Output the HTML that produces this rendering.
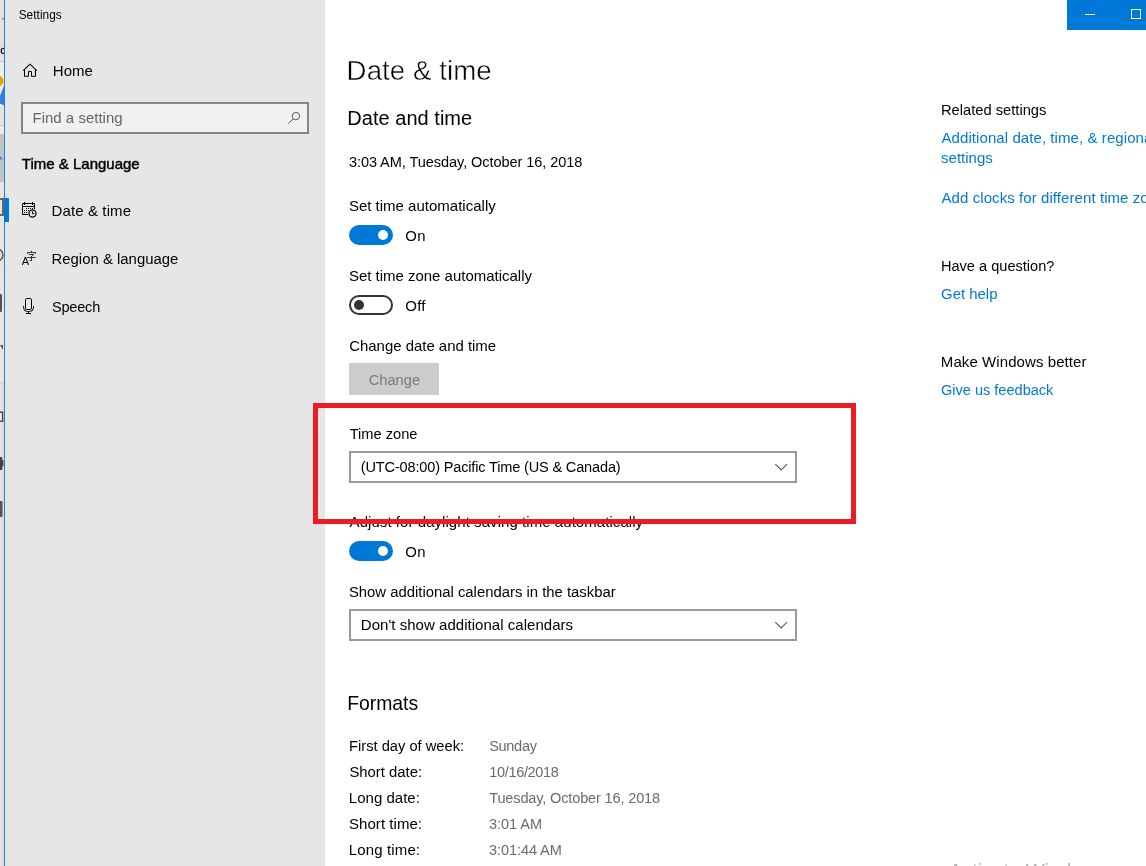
<!DOCTYPE html>
<html><head><meta charset="utf-8"><title>Settings</title>
<style>
html,body{margin:0;padding:0;}
body{width:1146px;height:866px;overflow:hidden;position:relative;background:#fff;font-family:"Liberation Sans",sans-serif;color:#000;}
.abs{position:absolute;white-space:nowrap;}
.t{position:absolute;white-space:nowrap;line-height:20px;font-size:15px;}
#txt{position:absolute;left:0;top:0;width:1146px;height:866px;will-change:transform;}
.toggle{position:absolute;width:44px;height:20px;border-radius:10px;box-sizing:border-box;}
.toggle.on{background:#0078d7;}
.toggle.on::after{content:"";position:absolute;left:29px;top:5px;width:10px;height:10px;border-radius:5px;background:#fff;}
.toggle.off{border:2px solid #333;background:#fff;}
.toggle.off::after{content:"";position:absolute;left:3px;top:3px;width:10px;height:10px;border-radius:5px;background:#333;}
.dd{position:absolute;left:349px;width:448px;height:32px;box-sizing:border-box;border:2px solid #999;background:#fff;}
svg{position:absolute;overflow:visible;will-change:transform;}
</style></head><body>
<div class="abs" id="bgstrip" style="left:0;top:0;width:4px;height:866px;background:linear-gradient(90deg,#e6e6e6,#dedede 60%,#e2dcd8);overflow:hidden;">
<svg width="4" height="540" viewBox="0 0 4 540" style="left:0;top:0;will-change:auto;">
 <rect x="0" y="0" width="4" height="61" fill="#e2e2e2"/>
 <rect x="2" y="18" width="2" height="1.4" fill="#8a8a8a"/>
 <path d="M4,48.6 Q1.2,47.6 1.2,50.8 Q1.2,54.2 4,53.2" fill="none" stroke="#14102a" stroke-width="1.3"/>
 <rect x="0" y="61" width="4" height="1" fill="#c8c8c8"/>
 <rect x="0" y="62" width="4" height="63" fill="#eeeeee"/>
 <circle cx="-1.8" cy="81" r="5.4" fill="#e8a600"/>
 <path d="M4,85.5 L0,96 L0,103.5 L4,105.5 Z" fill="#3b78e0"/>
 <rect x="0" y="106" width="4" height="19" fill="#e4e4e4"/>
 <rect x="0" y="125" width="4" height="1" fill="#c4c4c4"/>
 <rect x="0" y="126" width="4" height="8" fill="#ececec"/>
 <rect x="0" y="134" width="4" height="48" fill="#c2c2c2"/>
 <path d="M0,156 L3,159.5 L0,159.5 Z" fill="#3b78e0"/>
 <rect x="0" y="159.5" width="1.5" height="7" fill="#9ad4d4"/>
 <rect x="0" y="182" width="4" height="200" fill="#e6e6e6"/>
 <rect x="-2" y="199" width="5" height="16" fill="#d8ecd8" stroke="#4a4444" stroke-width="1.6"/>
 <circle cx="-3" cy="255" r="6" fill="#f0d8b8" stroke="#5a4a6a" stroke-width="1.4"/>
 <rect x="-2" y="294" width="4" height="18" rx="1.2" fill="#555"/>
 <path d="M0,345 H3 V350 Z" fill="#555"/>
 <rect x="0" y="382" width="4" height="1" fill="#cfcfcf"/>
 <rect x="-2" y="412.2" width="4.6" height="9" fill="#eee" stroke="#444" stroke-width="1.4"/>
 <path d="M0,457 L2.2,457 L2.2,459.5 L3.4,460.5 L3.4,466 L2.2,467 L2.2,470 L0,470 Z" fill="#444"/>
 <rect x="-2" y="501" width="4.5" height="16" rx="1.2" fill="#555"/>
</svg>
</div>
<div class="abs" id="side" style="left:5px;top:0;width:320px;height:866px;background:#e6e6e6;"></div>
<div class="abs" id="winborder" style="left:4px;top:0;width:1px;height:866px;background:#1c84d8;"></div>
<div class="abs" id="selmark" style="left:4px;top:198px;width:5px;height:24px;background:#0078d7;"></div>

<!-- search box -->
<div class="abs" style="left:21px;top:102px;width:288px;height:32px;box-sizing:border-box;border:2px solid #868686;background:#f1f1f1;"></div>

<!-- icons -->
<svg id="icons" style="left:0;top:0;" width="330" height="330" viewBox="0 0 330 330" fill="none" stroke="#000" stroke-width="1">
 <!-- home -->
 <path d="M23.2,70.6 L30,64.2 L36.8,70.6" stroke-width="1.1"/>
 <path d="M24.5,70 V76.3 H28.5 V71.5 H31.5 V76.3 H35.5 V70"/>
 <!-- search -->
 <circle cx="295.9" cy="116.1" r="3.7" stroke="#555"/>
 <path d="M293.2,118.8 L288.2,123.8" stroke="#555"/>
 <!-- calendar -->
 <path d="M22.5,203.5 H34.5 V209 M28.5,214.5 H22.5 V203.5 M22.5,206.5 H34.5 M24.5,202 V205 M32.5,202 V205"/>
 <g fill="#000" stroke="none">
  <rect x="26" y="208" width="1" height="1"/><rect x="28" y="208" width="1" height="1"/><rect x="30" y="208" width="1" height="1"/><rect x="32" y="208" width="1" height="1"/>
  <rect x="24" y="210" width="1" height="1"/><rect x="26" y="210" width="1" height="1"/><rect x="28" y="210" width="1" height="1"/>
  <rect x="24" y="212" width="1" height="1"/><rect x="26" y="212" width="1" height="1"/>
 </g>
 <circle cx="32.5" cy="213.5" r="4.6" fill="#e6e6e6" stroke="none"/><circle cx="32.5" cy="213.5" r="3.55" fill="#e6e6e6" stroke-width="1.25"/>
 <path d="M32.5,211.3 V213.7 H34.3"/>
 <!-- mic -->
 <rect x="25.5" y="298.5" width="6" height="11" rx="1.3"/>
 <path d="M23.5,306 V307.5 Q23.5,311.5 27.5,311.5 H29.5 Q33.5,311.5 33.5,307.5 V306 M28.5,311.5 V313.5 M26,313.5 H31"/>
 <!-- region -->
 <text x="21.8" y="264.8" font-family="Liberation Sans, sans-serif" font-size="11" fill="#000" stroke="none">A</text>
 <text x="26.6" y="259.6" font-family="Noto Sans CJK SC, Noto Sans CJK JP, sans-serif" font-size="10" fill="#000" stroke="none">字</text>
 <!-- dropdown chevrons -->
 </svg>

<!-- toggles -->
<div class="toggle on" style="left:349px;top:225px;"></div>
<div class="toggle off" style="left:349px;top:295px;"></div>
<div class="toggle on" style="left:349px;top:541px;"></div>
<!-- button -->
<div class="abs" style="left:349px;top:363px;width:90px;height:32px;background:#ccc;"></div>
<!-- dropdowns -->
<div class="dd" style="top:451px;"></div>
<div class="dd" style="top:609px;"></div>
<svg style="left:770px;top:455px;" width="24" height="190" viewBox="770 455 24 190" fill="none" stroke="#5c5c5c" stroke-width="1.15">
 <path d="M775.3,464.2 L781.2,470 L787,464.2"/>
 <path d="M775.3,622.2 L781.2,628 L787,622.2"/>
</svg>

<div id="txt">
<div class="t" id="s_title" style="left:18.65px;top:5.00px;font-size:11.86px;letter-spacing:0.041px;">Settings</div>
<div class="t" id="s_home" style="left:52.77px;top:61.00px;font-size:15.00px;letter-spacing:0.061px;">Home</div>
<div class="t" id="s_find" style="left:32.53px;top:108.00px;font-size:15.00px;letter-spacing:0.002px;color:#666;">Find a setting</div>
<div class="t" id="s_cat" style="left:21.86px;top:154.00px;font-size:15.00px;letter-spacing:0.000px;-webkit-text-stroke:0.45px #000;">Time &amp; Language</div>
<div class="t" id="s_dt" style="left:51.53px;top:201.00px;font-size:15.00px;letter-spacing:0.118px;">Date &amp; time</div>
<div class="t" id="s_rl" style="left:51.52px;top:249.00px;font-size:14.90px;letter-spacing:0.008px;">Region &amp; language</div>
<div class="t" id="s_sp" style="left:51.90px;top:297.00px;font-size:14.55px;letter-spacing:-0.198px;">Speech</div>
<div class="t" id="h1" style="left:346.62px;top:61.00px;font-size:27.64px;letter-spacing:0.078px;-webkit-text-stroke:0.45px #fff;">Date &amp; time</div>
<div class="t" id="h2" style="left:347.35px;top:108.00px;font-size:20.00px;letter-spacing:0.026px;">Date and time</div>
<div class="t" id="now" style="left:348.95px;top:152.00px;font-size:14.55px;letter-spacing:-0.073px;">3:03 AM, Tuesday, October 16, 2018</div>
<div class="t" id="l1" style="left:348.90px;top:196.00px;font-size:15.00px;letter-spacing:0.005px;">Set time automatically</div>
<div class="t" id="on1" style="left:405.36px;top:226.00px;font-size:14.88px;letter-spacing:0.267px;">On</div>
<div class="t" id="l2" style="left:348.90px;top:266.00px;font-size:14.97px;letter-spacing:0.002px;">Set time zone automatically</div>
<div class="t" id="off" style="left:405.36px;top:296.00px;font-size:15.00px;letter-spacing:0.149px;">Off</div>
<div class="t" id="l3" style="left:349.20px;top:336.00px;font-size:14.94px;letter-spacing:-0.005px;">Change date and time</div>
<div class="t" id="btn" style="left:368.66px;top:370.00px;font-size:14.69px;letter-spacing:-0.011px;color:#7a7a7a;">Change</div>
<div class="t" id="l4" style="left:349.73px;top:424.00px;font-size:14.66px;letter-spacing:-0.009px;">Time zone</div>
<div class="t" id="dd1" style="left:360.81px;top:457.00px;font-size:14.55px;letter-spacing:-0.165px;">(UTC-08:00) Pacific Time (US &amp; Canada)</div>
<div class="t" id="l5" style="left:349.58px;top:512.00px;font-size:15.00px;letter-spacing:0.057px;">Adjust for daylight saving time automatically</div>
<div class="t" id="on2" style="left:405.36px;top:542.00px;font-size:14.88px;letter-spacing:0.267px;">On</div>
<div class="t" id="l6" style="left:348.91px;top:582.00px;font-size:14.87px;letter-spacing:-0.002px;">Show additional calendars in the taskbar</div>
<div class="t" id="dd2" style="left:360.77px;top:615.00px;font-size:15.00px;letter-spacing:0.032px;">Don't show additional calendars</div>
<div class="t" id="h3" style="left:347.13px;top:693.00px;font-size:19.41px;letter-spacing:-0.022px;">Formats</div>
<div class="t" id="f1" style="left:349.02px;top:736.00px;font-size:14.69px;letter-spacing:-0.000px;">First day of week:</div>
<div class="t" id="f2" style="left:349.38px;top:762.00px;font-size:14.89px;letter-spacing:0.000px;">Short date:</div>
<div class="t" id="f3" style="left:348.87px;top:788.00px;font-size:15.00px;letter-spacing:0.013px;">Long date:</div>
<div class="t" id="f4" style="left:349.05px;top:814.00px;font-size:15.00px;letter-spacing:0.044px;">Short time:</div>
<div class="t" id="f5" style="left:348.87px;top:840.00px;font-size:15.00px;letter-spacing:0.126px;">Long time:</div>
<div class="t" id="v1" style="left:489.14px;top:736.00px;font-size:14.55px;letter-spacing:-0.305px;color:#6b6b6b;">Sunday</div>
<div class="t" id="v2" style="left:489.33px;top:762.00px;font-size:14.55px;letter-spacing:-0.367px;color:#6b6b6b;">10/16/2018</div>
<div class="t" id="v3" style="left:489.25px;top:788.00px;font-size:14.55px;letter-spacing:-0.158px;color:#6b6b6b;">Tuesday, October 16, 2018</div>
<div class="t" id="v4" style="left:488.95px;top:814.00px;font-size:14.55px;letter-spacing:-0.023px;color:#6b6b6b;">3:01 AM</div>
<div class="t" id="v5" style="left:488.95px;top:840.00px;font-size:14.55px;letter-spacing:-0.075px;color:#6b6b6b;">3:01:44 AM</div>
<div class="t" id="r1" style="left:940.90px;top:100.00px;font-size:14.71px;letter-spacing:0.004px;">Related settings</div>
<div class="t" id="r3" style="left:941.05px;top:148.00px;font-size:14.99px;letter-spacing:0.010px;color:#0078d7;">settings</div>
<div class="t" id="r5" style="left:940.94px;top:256.00px;font-size:14.56px;letter-spacing:0.017px;">Have a question?</div>
<div class="t" id="r6" style="left:941.11px;top:284.00px;font-size:14.95px;letter-spacing:-0.017px;color:#0078d7;">Get help</div>
<div class="t" id="r7" style="left:940.87px;top:352.00px;font-size:15.00px;letter-spacing:0.078px;">Make Windows better</div>
<div class="t" id="r8" style="left:940.98px;top:380.00px;font-size:14.55px;letter-spacing:-0.001px;color:#0078d7;">Give us feedback</div>
<div class="t" id="r2" style="left:941.5px;top:128px;letter-spacing:0.076px;color:#0078d7;">Additional date, time, &amp; regional</div>
<div class="t" id="r4" style="left:941.5px;top:188px;letter-spacing:0.077px;color:#0078d7;">Add clocks for different time zones</div>

</div>
<!-- red highlight -->
<div class="abs" id="redbox" style="left:313px;top:403px;width:543px;height:121px;box-sizing:border-box;border:5px solid #ed1c24;"></div>

<!-- window buttons -->
<div class="abs" style="left:1067px;top:0;width:79px;height:30px;background:#0078d7;"></div>
<div class="abs" style="left:1085px;top:14px;width:10px;height:1px;background:#fff;"></div>
<div class="abs" style="left:1131px;top:9px;width:10px;height:10px;box-sizing:border-box;border:1px solid #fff;"></div>

<div class="t" id="activate" style="will-change:transform;left:948.6px;top:858px;font-size:20px;line-height:26px;color:#b4b4b4;">Activate Windows</div>
</body></html>
